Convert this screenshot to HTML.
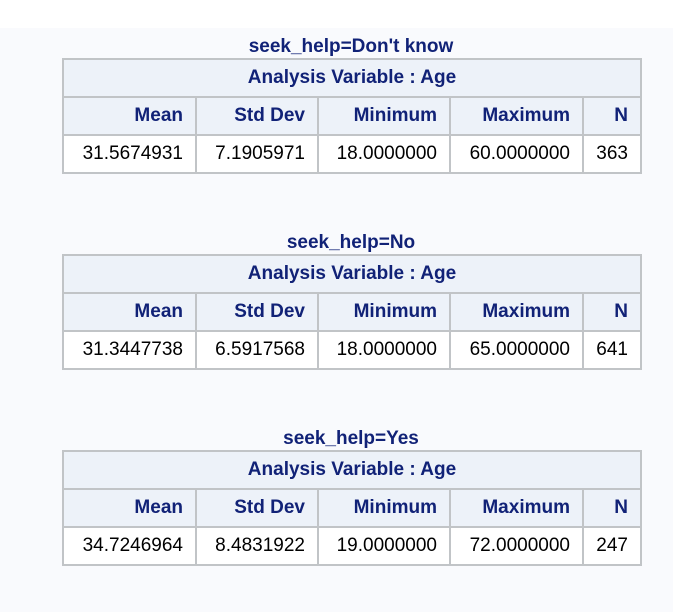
<!DOCTYPE html><html><head><style>
body{margin:0;background:#fff;width:678px;height:612px;overflow:hidden;font-family:"Liberation Sans",Arial,sans-serif}
#bg{position:absolute;left:0;top:28px;width:673px;height:584px;background:#f9fafd}
.t{position:absolute;left:62px;width:578px}
.cap{text-align:center;color:#112277;font-weight:bold;font-size:19px;height:26px;line-height:30px}
table{border-collapse:collapse;width:578px;table-layout:fixed}
td,th{border:2px solid #c1c4c7;height:36px;padding:0 12px 0 0;text-align:right;font-size:19px;line-height:20px;white-space:nowrap;overflow:hidden}
th{background:#edf2f9;color:#112277;font-weight:bold}
td{background:#fff;color:#000}
th.c{text-align:center;padding:0}
</style></head><body><div id="bg"></div>
<div class="t" style="top:32px">
<div class="cap">seek_help=Don't know</div>
<table><colgroup><col style="width:133px"><col style="width:122px"><col style="width:132px"><col style="width:133px"><col style="width:58px"></colgroup><tr><th class="c" colspan="5">Analysis Variable : Age</th></tr>
<tr><th>Mean</th><th>Std Dev</th><th>Minimum</th><th>Maximum</th><th>N</th></tr>
<tr><td>31.5674931</td><td>7.1905971</td><td>18.0000000</td><td>60.0000000</td><td>363</td></tr></table></div>
<div class="t" style="top:228px">
<div class="cap">seek_help=No</div>
<table><colgroup><col style="width:133px"><col style="width:122px"><col style="width:132px"><col style="width:133px"><col style="width:58px"></colgroup><tr><th class="c" colspan="5">Analysis Variable : Age</th></tr>
<tr><th>Mean</th><th>Std Dev</th><th>Minimum</th><th>Maximum</th><th>N</th></tr>
<tr><td>31.3447738</td><td>6.5917568</td><td>18.0000000</td><td>65.0000000</td><td>641</td></tr></table></div>
<div class="t" style="top:424px">
<div class="cap">seek_help=Yes</div>
<table><colgroup><col style="width:133px"><col style="width:122px"><col style="width:132px"><col style="width:133px"><col style="width:58px"></colgroup><tr><th class="c" colspan="5">Analysis Variable : Age</th></tr>
<tr><th>Mean</th><th>Std Dev</th><th>Minimum</th><th>Maximum</th><th>N</th></tr>
<tr><td>34.7246964</td><td>8.4831922</td><td>19.0000000</td><td>72.0000000</td><td>247</td></tr></table></div>
</body></html>
